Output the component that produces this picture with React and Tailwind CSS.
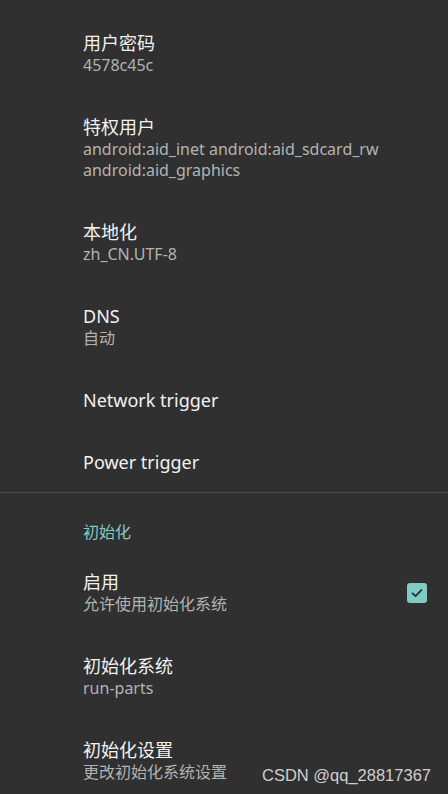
import React from 'react';

const font = { fontFamily: '"Noto Sans", "Noto Sans CJK SC", sans-serif' };

function PrefItem({ title, summary, children }) {
  return (
    <div className={`flex items-center pl-[83px] pr-[20px] pt-[19px] ${summary ? 'pb-[20px]' : 'pb-[18.5px]'}`}>
      <div className="flex-1 min-w-0">
        <div className="text-[18px] leading-[24px] text-[#f2f2f2]">{title}</div>
        {summary && (
          <div className="text-[16px] leading-[21px] text-[#b3b3b3]">{summary}</div>
        )}
      </div>
      {children}
    </div>
  );
}

function Checkbox() {
  return (
    <div className="w-[20px] h-[20px] rounded-[3px] bg-[#80cbc4] flex items-center justify-center mr-[1px]">
      <svg width="14" height="14" viewBox="0 0 24 24" fill="none" stroke="#263238" strokeWidth="3.2" strokeLinecap="round" strokeLinejoin="round">
        <path d="M4.5 12.5l5 5L19.5 7" />
      </svg>
    </div>
  );
}

export default function App() {
  return (
    <div className="relative w-[448px] h-[794px] overflow-hidden bg-[#303030]" style={font}>
      <div className="pt-[12px]">
        <PrefItem title="用户密码" summary="4578c45c" />
        <PrefItem
          title="特权用户"
          summary={<>android:aid_inet android:aid_sdcard_rw<br />android:aid_graphics</>}
        />
        <PrefItem title="本地化" summary="zh_CN.UTF-8" />
        <PrefItem title="DNS" summary="自动" />
        <PrefItem title="Network trigger" />
        <PrefItem title="Power trigger" />

        <div className="h-px bg-[#4a4a4a]" />

        <div className="pl-[83px] pt-[29px] pb-[8px] text-[16px] leading-[21px] text-[#80cbc4]">初始化</div>
        <PrefItem title="启用" summary="允许使用初始化系统">
          <Checkbox />
        </PrefItem>
        <PrefItem title="初始化系统" summary="run-parts" />
        <PrefItem title="初始化设置" summary="更改初始化系统设置" />
      </div>

      <div
        className="absolute right-[17px] bottom-[8px] text-[16.5px] leading-[22px] text-[#cfcfcf]"
        style={{ fontFamily: '"Liberation Sans", Arial, sans-serif' }}
      >
        CSDN @qq_28817367
      </div>
    </div>
  );
}
